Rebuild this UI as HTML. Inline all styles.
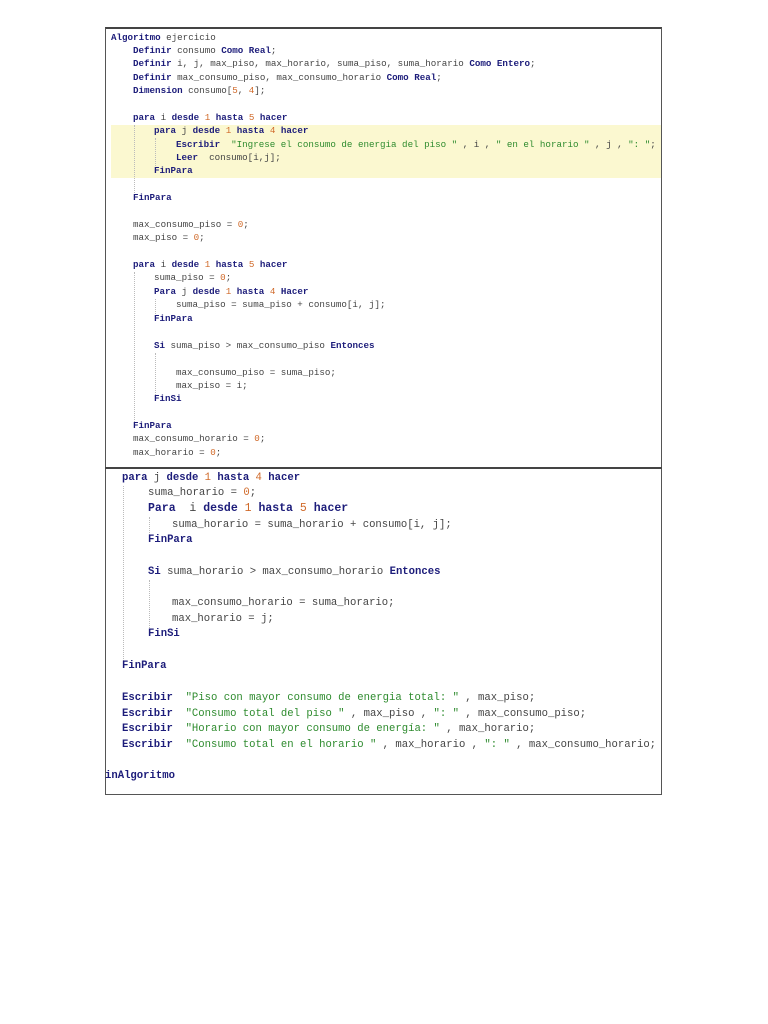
<!DOCTYPE html>
<html><head><meta charset="utf-8">
<style>
html,body{margin:0;padding:0;background:#fff;width:768px;height:1024px;overflow:hidden}
.box{position:absolute;left:105px;top:27px;width:555px;height:765px;border:1px solid #555;border-top:2px solid #444;}
.div{position:absolute;left:105px;top:467px;width:557px;height:2px;background:#444}
.hl{position:absolute;left:111px;top:125px;width:550px;height:53px;background:#fbf8d0}
.l{position:absolute;white-space:pre;font-family:"Liberation Mono",monospace;color:#444;line-height:1}
.a{font-size:9.2px}
.b{font-size:10.6px}
.k{color:#1c1c7a;font-weight:bold}
.n{color:#d06a2a}
.s{color:#2e8b2e}
.g{position:absolute;width:0;border-left:1px dotted #bbb}
</style></head><body>
<div class="box"></div>
<div class="hl"></div>
<div class="div"></div>

<div class="g" style="left:134px;top:125px;height:70px"></div>
<div class="g" style="left:155px;top:138px;height:28px"></div>
<div class="g" style="left:134px;top:272px;height:150px"></div>
<div class="g" style="left:155px;top:299px;height:15px"></div>
<div class="g" style="left:155px;top:353px;height:42px"></div>
<div class="g" style="left:123px;top:486px;height:177px"></div>
<div class="g" style="left:149px;top:517px;height:20px"></div>
<div class="g" style="left:149px;top:580px;height:52px"></div>

<div class="l a" style="left:111px;top:33px"><span class="k">Algoritmo</span> ejercicio</div>
<div class="l a" style="left:133px;top:46px"><span class="k">Definir</span> consumo <span class="k">Como Real</span>;</div>
<div class="l a" style="left:133px;top:59px"><span class="k">Definir</span> i, j, max_piso, max_horario, suma_piso, suma_horario <span class="k">Como Entero</span>;</div>
<div class="l a" style="left:133px;top:73px"><span class="k">Definir</span> max_consumo_piso, max_consumo_horario <span class="k">Como Real</span>;</div>
<div class="l a" style="left:133px;top:86px"><span class="k">Dimension</span> consumo[<span class="n">5</span>, <span class="n">4</span>];</div>
<div class="l a" style="left:133px;top:113px"><span class="k">para</span> i <span class="k">desde</span> <span class="n">1</span> <span class="k">hasta</span> <span class="n">5</span> <span class="k">hacer</span></div>
<div class="l a" style="left:154px;top:126px"><span class="k">para</span> j <span class="k">desde</span> <span class="n">1</span> <span class="k">hasta</span> <span class="n">4</span> <span class="k">hacer</span></div>
<div class="l a" style="left:176px;top:140px"><span class="k">Escribir</span>  <span class="s">"Ingrese el consumo de energia del piso "</span> , i , <span class="s">" en el horario "</span> , j , <span class="s">": "</span>;</div>
<div class="l a" style="left:176px;top:153px"><span class="k">Leer</span>  consumo[i,j];</div>
<div class="l a" style="left:154px;top:166px"><span class="k">FinPara</span></div>
<div class="l a" style="left:133px;top:193px"><span class="k">FinPara</span></div>
<div class="l a" style="left:133px;top:220px">max_consumo_piso = <span class="n">0</span>;</div>
<div class="l a" style="left:133px;top:233px">max_piso = <span class="n">0</span>;</div>
<div class="l a" style="left:133px;top:260px"><span class="k">para</span> i <span class="k">desde</span> <span class="n">1</span> <span class="k">hasta</span> <span class="n">5</span> <span class="k">hacer</span></div>
<div class="l a" style="left:154px;top:273px">suma_piso = <span class="n">0</span>;</div>
<div class="l a" style="left:154px;top:287px"><span class="k">Para</span> j <span class="k">desde</span> <span class="n">1</span> <span class="k">hasta</span> <span class="n">4</span> <span class="k">Hacer</span></div>
<div class="l a" style="left:176px;top:300px">suma_piso = suma_piso + consumo[i, j];</div>
<div class="l a" style="left:154px;top:314px"><span class="k">FinPara</span></div>
<div class="l a" style="left:154px;top:341px"><span class="k">Si</span> suma_piso &gt; max_consumo_piso <span class="k">Entonces</span></div>
<div class="l a" style="left:176px;top:368px">max_consumo_piso = suma_piso;</div>
<div class="l a" style="left:176px;top:381px">max_piso = i;</div>
<div class="l a" style="left:154px;top:394px"><span class="k">FinSi</span></div>
<div class="l a" style="left:133px;top:421px"><span class="k">FinPara</span></div>
<div class="l a" style="left:133px;top:434px">max_consumo_horario = <span class="n">0</span>;</div>
<div class="l a" style="left:133px;top:448px">max_horario = <span class="n">0</span>;</div>

<div class="l b" style="left:122px;top:473px"><span class="k">para</span> j <span class="k">desde</span> <span class="n">1</span> <span class="k">hasta</span> <span class="n">4</span> <span class="k">hacer</span></div>
<div class="l b" style="left:148px;top:488px">suma_horario = <span class="n">0</span>;</div>
<div class="l b" style="left:148px;top:503px;font-size:11.5px"><span class="k">Para</span>  i <span class="k">desde</span> <span class="n">1</span> <span class="k">hasta</span> <span class="n">5</span> <span class="k">hacer</span></div>
<div class="l b" style="left:172px;top:520px">suma_horario = suma_horario + consumo[i, j];</div>
<div class="l b" style="left:148px;top:535px"><span class="k">FinPara</span></div>
<div class="l b" style="left:148px;top:567px"><span class="k">Si</span> suma_horario &gt; max_consumo_horario <span class="k">Entonces</span></div>
<div class="l b" style="left:172px;top:598px">max_consumo_horario = suma_horario;</div>
<div class="l b" style="left:172px;top:614px">max_horario = j;</div>
<div class="l b" style="left:148px;top:629px"><span class="k">FinSi</span></div>
<div class="l b" style="left:122px;top:661px"><span class="k">FinPara</span></div>
<div class="l b" style="left:122px;top:693px"><span class="k">Escribir</span>  <span class="s">"Piso con mayor consumo de energia total: "</span> , max_piso;</div>
<div class="l b" style="left:122px;top:709px"><span class="k">Escribir</span>  <span class="s">"Consumo total del piso "</span> , max_piso , <span class="s">": "</span> , max_consumo_piso;</div>
<div class="l b" style="left:122px;top:724px"><span class="k">Escribir</span>  <span class="s">"Horario con mayor consumo de energía: "</span> , max_horario;</div>
<div class="l b" style="left:122px;top:740px"><span class="k">Escribir</span>  <span class="s">"Consumo total en el horario "</span> , max_horario , <span class="s">": "</span> , max_consumo_horario;</div>
<div class="l b" style="left:105px;top:771px"><span class="k">inAlgoritmo</span></div>
</body></html>
